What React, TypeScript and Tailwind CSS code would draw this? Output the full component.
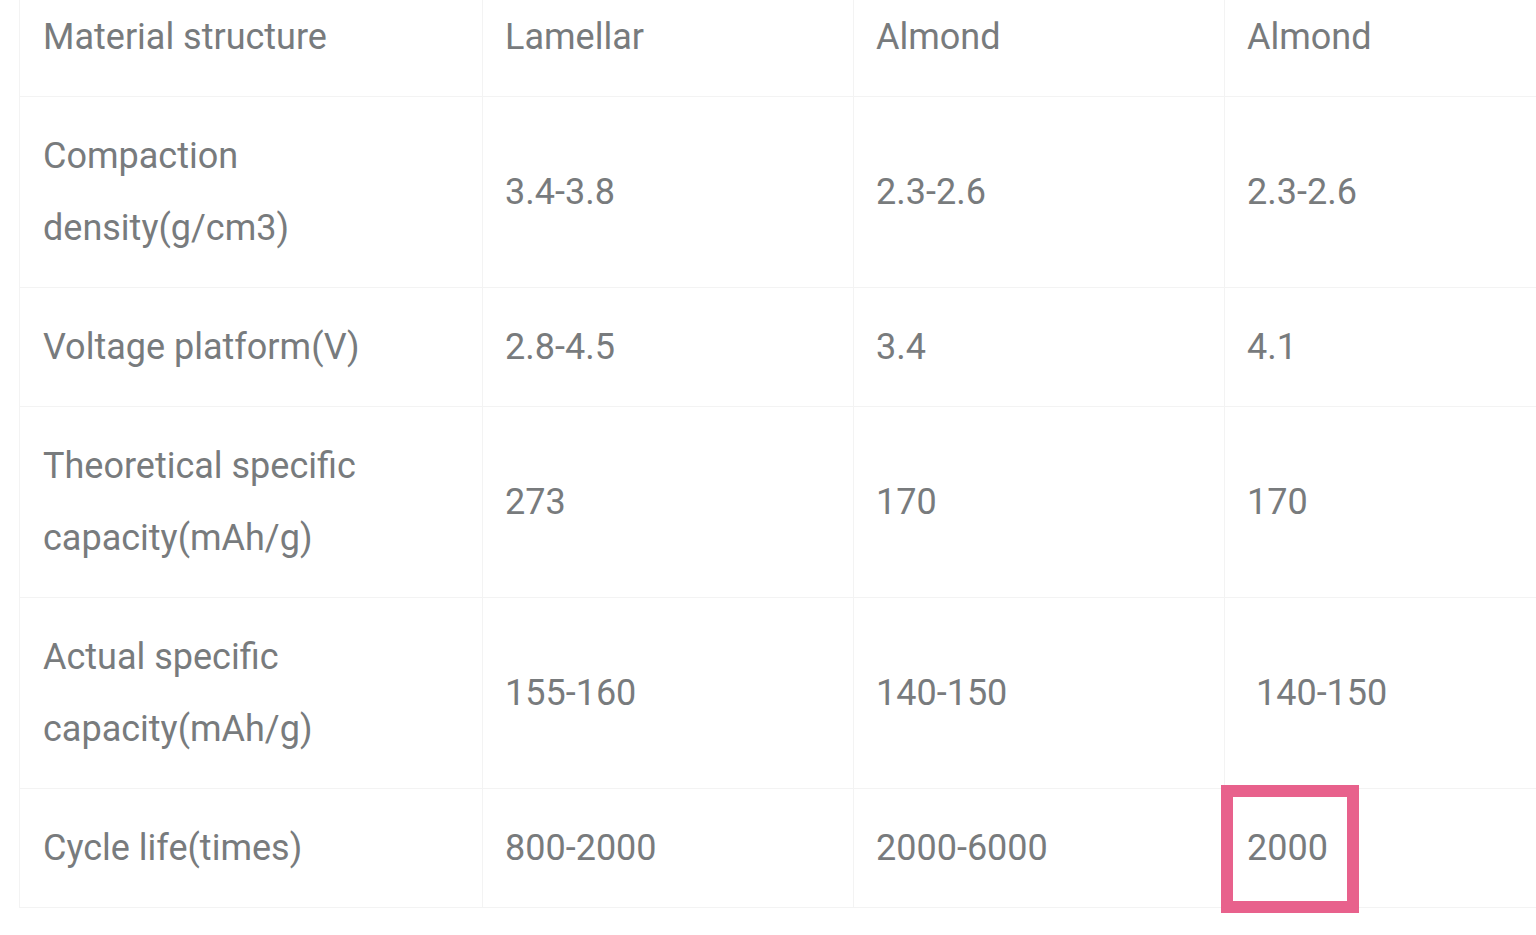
const rows: { label: React.ReactNode; values: string[] }[] = [
  { label: 'Material structure', values: ['Lamellar', 'Almond', 'Almond'] },
  { label: <>Compaction<br />density(g/cm3)</>, values: ['3.4-3.8', '2.3-2.6', '2.3-2.6'] },
  { label: 'Voltage platform(V)', values: ['2.8-4.5', '3.4', '4.1'] },
  { label: <>Theoretical specific<br />capacity(mAh/g)</>, values: ['273', '170', '170'] },
  { label: <>Actual specific<br />capacity(mAh/g)</>, values: ['155-160', '140-150', '\u00a0140-150'] },
  { label: 'Cycle life(times)', values: ['800-2000', '2000-6000', '2000'] },
]

export default function App() {
  return (
    <div className="w-[1536px] h-[935px] overflow-hidden bg-white">
      <table
        className="table-fixed border-collapse mt-[-23px] ml-[19px] w-[1576px] text-[36px] leading-[72px] text-[#787b7d]"
        style={{ fontFamily: 'Roboto, "Noto Sans", sans-serif' }}
      >
        <colgroup>
          <col className="w-[463px]" />
          <col className="w-[371px]" />
          <col className="w-[371px]" />
          <col className="w-[371px]" />
        </colgroup>
        <tbody>
          {rows.map((row, i) => (
            <tr key={i}>
              <td className="border border-[#f3f3f3] px-[23px] py-[23px] align-middle">{row.label}</td>
              {row.values.map((v, j) => {
                const marked = i === rows.length - 1 && j === 2
                return (
                  <td
                    key={j}
                    className="relative border border-[#f3f3f3] px-[22px] py-[23px] align-middle whitespace-pre"
                  >
                    {v}
                    {marked && (
                      <div className="absolute left-[-4px] top-[-4px] w-[138px] h-[128px] border-[12px] border-[#e8618c]" />
                    )}
                  </td>
                )
              })}
            </tr>
          ))}
        </tbody>
      </table>
    </div>
  )
}
